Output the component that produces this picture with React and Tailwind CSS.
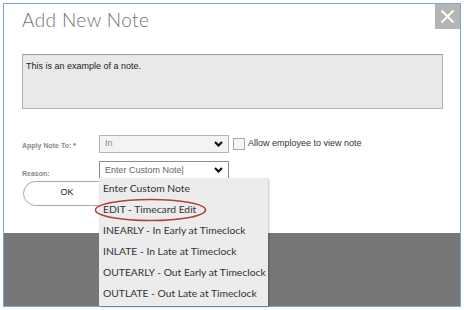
import React from "react";

const reasons = [
  "Enter Custom Note",
  "EDIT - Timecard Edit",
  "INEARLY - In Early at Timeclock",
  "INLATE - In Late at Timeclock",
  "OUTEARLY - Out Early at Timeclock",
  "OUTLATE - Out Late at Timeclock",
];

const Chevron = () => (
  <svg width="9" height="6" viewBox="0 0 9 6" className="shrink-0">
    <path d="M1 1l3.5 3.5L8 1" fill="none" stroke="#111" strokeWidth="2.2" />
  </svg>
);

const App = () => {
  return (
    <div className="w-[464px] h-[310px] bg-white pt-[3px] pl-[3px] font-['Liberation_Sans',Arial,sans-serif]">
      <div className="relative w-[458px] h-[304px] border border-[#7fa2d6] flex flex-col">
        {/* close button */}
        <div className="absolute top-0 right-0 w-[25px] h-[25px] bg-[#b5b5b5] flex items-center justify-center">
          <svg width="15" height="15" viewBox="0 0 15 15">
            <path d="M1.5 1.5l12 12M13.5 1.5l-12 12" stroke="#fff" strokeWidth="2" />
          </svg>
        </div>

        <div className="h-[229px] bg-white pl-[18px] pr-[17px]">
          <h1 className="pt-[4px] text-[19px] leading-[24px] font-light text-[#707070] font-['Lato',sans-serif] tracking-[0.4px]">
            Add New Note
          </h1>

          <div className="mt-[22px] h-[55px] bg-[#e9e9e9] border border-[#b0b0b0] border-t-[#999] px-[3px] pt-[5px] text-[9px] text-[#222]">
            This is an example of a note.
          </div>

          <div className="mt-[26px] flex items-center">
            <div className="w-[77px] text-[7px] font-bold text-[#8a8a8a] pt-[4px]">
              Apply Note To: <span className="text-[#d33]">*</span>
            </div>
            <div className="w-[130px] h-[18px] border border-[#b3b3b3] bg-[#f3f3f3] flex items-center justify-between pl-[5px] pr-[5px] text-[9px] text-[#8a8a8a]">
              <span>In</span>
              <Chevron />
            </div>
            <div className="ml-[4px] w-[12px] h-[12px] border border-[#aaa] bg-[#f6f6f6]" />
            <span className="ml-[3px] text-[9px] text-[#333]">Allow employee to view note</span>
          </div>

          <div className="mt-[8px] flex items-center">
            <div className="w-[77px] text-[7px] font-bold text-[#8a8a8a] pt-[8px]">Reason:</div>
            <div className="w-[130px] h-[18px] border border-[#8d8d8d] bg-white flex items-center justify-between pl-[5px] pr-[5px] text-[9px] text-[#666]">
              <span>Enter Custom Note|</span>
              <Chevron />
            </div>
          </div>

          <div className="mt-[1px] ml-[1px] w-[88px] h-[25px] rounded-full border border-[#a8a8a8] flex items-center justify-center text-[9px] text-[#222]">
            OK
          </div>
        </div>

        <div className="flex-1 bg-[#777777]" />

        {/* open dropdown list */}
        <div className="absolute left-[95px] top-[174px] w-[169px] bottom-0 bg-[#ececec] shadow-[1px_1px_2px_rgba(0,0,0,0.25)] font-['Lato',sans-serif] text-[10.3px] text-[#333]">
          {reasons.map((r) => (
            <div key={r} className="h-[21px] flex items-center pl-[4px]">
              {r}
            </div>
          ))}
        </div>

        {/* highlight ellipse */}
        <svg className="absolute left-[90px] top-[194px]" width="113" height="24" viewBox="0 0 113 24">
          <ellipse cx="56.5" cy="12" rx="55" ry="10.5" fill="none" stroke="#b0413e" strokeWidth="1.6" />
        </svg>
      </div>
    </div>
  );
};

export default App;
